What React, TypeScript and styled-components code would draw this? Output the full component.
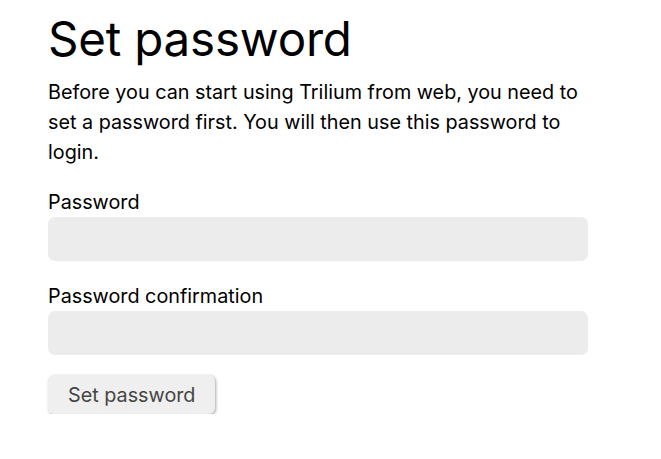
import React from "react";
import styled, { createGlobalStyle } from "styled-components";

const GlobalStyle = createGlobalStyle`
  body {
    margin: 0;
    background: #ffffff;
    font-family: Inter, "Noto Sans", sans-serif;
    color: #000000;
  }
`;

const App: React.FC = () => {
  return (
    <>
      <GlobalStyle />
      <Page>
        <Title>Set password</Title>
        <Intro>
          Before you can start using Trilium from web, you need to set a password first. You will
          then use this password to login.
        </Intro>
        <Form onSubmit={(e) => e.preventDefault()}>
          <Field>
            <Label htmlFor="password">Password</Label>
            <Input id="password" type="password" />
          </Field>
          <Field>
            <Label htmlFor="password1">Password confirmation</Label>
            <Input id="password1" type="password" />
          </Field>
          <Button type="submit">Set password</Button>
        </Form>
      </Page>
    </>
  );
};

export default App;

const Page = styled.div`
  width: 540px;
  padding: 0 48px;
`;

const Title = styled.h1`
  margin: 10px 0 0;
  font-size: 47.5px;
  font-weight: 400;
  line-height: 58px;
  letter-spacing: -0.2px;
`;

const Intro = styled.p`
  margin: 9px 0 0;
  font-size: 19.8px;
  line-height: 30px;
`;

const Form = styled.form`
  display: flex;
  flex-direction: column;
  align-items: flex-start;
  margin-top: 20px;
`;

const Field = styled.div`
  display: flex;
  flex-direction: column;
  width: 100%;
  margin-bottom: 20px;
`;

const Label = styled.label`
  font-size: 19.8px;
  line-height: 30px;
`;

const Input = styled.input`
  box-sizing: border-box;
  height: 44px;
  width: 100%;
  border: none;
  border-radius: 7px;
  background: #ececec;
  padding: 0 12px;
  font: inherit;
  outline: none;
`;

const Button = styled.button`
  height: 39px;
  padding: 0 20px;
  border: none;
  border-radius: 6px;
  background: #efefef;
  color: #454545;
  font-family: Inter, "Noto Sans", sans-serif;
  font-size: 19.8px;
  box-shadow: 1px 1px 3px rgba(0, 0, 0, 0.35);
  cursor: pointer;
`;
